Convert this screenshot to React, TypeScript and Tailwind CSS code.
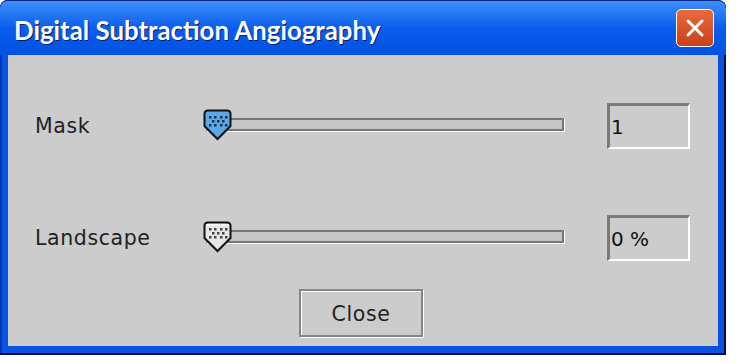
import React from 'react'

const bodyFont = { fontFamily: '"DejaVu Sans", Verdana, sans-serif' }

function Thumb({ blue }: { blue: boolean }) {
  const dots = [
    [6, 7], [11, 7], [17, 7], [22, 7],
    [9, 11], [14, 11], [19, 11],
    [6, 15], [11, 15], [17, 15], [22, 15],
  ]
  return (
    <svg width="30" height="32" viewBox="0 0 30 32" className="absolute left-0 top-[6px]">
      <path
        d="M1.5 5 Q1.5 1.5 5 1.5 H24 Q27.5 1.5 27.5 5 V17 L14.5 30 L1.5 17 Z"
        fill={blue ? '#5aa8e6' : '#e6e6e6'}
        stroke="#111"
        strokeWidth="2"
      />
      {!blue && <path d="M3 4 H26" stroke="#fff" strokeWidth="1.5" />}
      {dots.map(([x, y], i) => (
        <rect key={i} x={x} y={y} width="2.5" height="2.5" fill={blue ? '#16304f' : '#444'} />
      ))}
    </svg>
  )
}

function Row({ label, value, blue }: { label: string; value: string; blue: boolean }) {
  return (
    <div className="flex items-center h-[46px]">
      <div className="w-[168px] text-[20.5px] tracking-[0.6px] text-[#222]" style={bodyFont}>{label}</div>
      <div className="relative w-[361px] h-[46px]">
        <div className="absolute left-[3px] right-0 top-[15px] h-[13px] border-2 border-[#777777] bg-[#c6c6c6] shadow-[1px_1px_0_#ffffff]" />
        <Thumb blue={blue} />
      </div>
      <div
        className="ml-[43px] w-[83px] h-[46px] border-t-[3px] border-l-[3px] border-b-2 border-r-2 border-t-[#7a7a7a] border-l-[#7a7a7a] border-b-white border-r-white flex items-center pl-[1px] text-[20px] text-[#111]"
        style={bodyFont}
      >
        {value}
      </div>
    </div>
  )
}

export default function App() {
  return (
    <div className="w-[738px] h-[363px] bg-white">
      <div className="w-[726px] h-[355px] rounded-t-[8px] bg-[#0a52e0] flex flex-col shadow-[inset_-2px_-2px_0_#000c4a,inset_2px_0_0_#0836b0]">
        {/* Title bar */}
        <div className="h-[55px] rounded-t-[8px] bg-linear-to-b from-[#3d8ffb] via-[#0a5cee] to-[#0052e2] flex items-center justify-between pl-[14px] pr-[12px] border-t border-[#0b2a8a]">
          <span
            className="pt-[4px] text-white font-bold text-[25.8px] [text-shadow:1px_1px_0_#0a1d70]"
            style={{ fontFamily: 'Lato, "Open Sans", sans-serif' }}
          >
            Digital Subtraction Angiography
          </span>
          <div className="w-[38px] h-[38px] rounded-[5px] border-[1.5px] border-white bg-linear-to-b from-[#ea6a3c] to-[#c8401a] flex items-center justify-center">
            <svg width="22" height="22" viewBox="0 0 22 22">
              <path d="M4 4 L18 18 M18 4 L4 18" stroke="#fff" strokeWidth="3" strokeLinecap="round" />
            </svg>
          </div>
        </div>

        {/* Content */}
        <div className="flex-1 mx-[8px] mb-[9px] bg-[#cccccc] flex flex-col pl-[27px] pt-[48px]">
          <Row label="Mask" value="1" blue={true} />
          <div className="h-[66px]" />
          <Row label="Landscape" value="0 %" blue={false} />
          <div className="flex justify-center mt-[28px] -ml-[27px] w-[706px]">
            <button
              className="w-[124px] h-[48px] pt-[3px] border-2 border-[#858585] shadow-[inset_1px_1px_0_#ffffff,1px_1px_0_#ffffff] text-[20.5px] tracking-[0.6px] text-[#222]"
              style={bodyFont}
            >
              Close
            </button>
          </div>
        </div>
      </div>
    </div>
  )
}
